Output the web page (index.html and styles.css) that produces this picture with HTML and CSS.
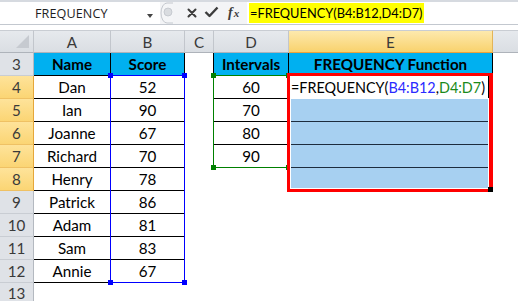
FILE: index.html
```html
<!DOCTYPE html>
<html>
<head>
<meta charset="utf-8">
<link rel="stylesheet" href="styles.css">
</head>
<body>
<div class="app">
  <div class="fbar">
    <div class="namebox"><span class="nb-text">FREQUENCY</span><span class="nb-arrow"></span></div>
    <div class="tools">
      <svg class="knob" width="14" height="22" viewBox="0 0 14 22">
        <path d="M13 1 H7 A6 10 0 0 0 7 21 H13" fill="#f4f5f7" stroke="#c4c8ce" stroke-width="1"/>
        <circle cx="8" cy="10" r="4" fill="#d9dce0" stroke="#c0c4ca" stroke-width="0.8"/>
      </svg>
      <svg class="ic-x" width="10" height="10" viewBox="0 0 10 10">
        <path d="M1.5 1.5 L8.5 8.5 M8.5 1.5 L1.5 8.5" stroke="#3c3c3c" stroke-width="2" stroke-linecap="round"/>
      </svg>
      <svg class="ic-check" width="15" height="12" viewBox="0 0 15 12">
        <path d="M1.5 6 L5.5 10 L13.5 1.5" fill="none" stroke="#3c3c3c" stroke-width="2.4" stroke-linejoin="round"/>
      </svg>
      <span class="fx"><i>f</i><i class="fx-x">x</i></span>
    </div>
    <div class="formula"><span class="hl">=FREQUENCY(B4:B12,D4:D7)</span></div>
  </div>

  <div class="sheet">
    <div class="ch corner"><span class="tri"></span></div>
    <div class="ch">A</div>
    <div class="ch">B</div>
    <div class="ch">C</div>
    <div class="ch">D</div>
    <div class="ch ch-sel">E</div>
    <div class="ch ch-rest"></div>

    <div class="rh">3</div>
    <div class="c t hdr">Name</div>
    <div class="c t hdr">Score</div>
    <div class="c br"></div>
    <div class="c t hdr">Intervals</div>
    <div class="c t hdr">FREQUENCY Function</div>
    <div class="c"></div>

    <div class="rh rh-sel">4</div>
    <div class="c t">Dan</div>
    <div class="c t">52</div>
    <div class="c br"></div>
    <div class="c t">60</div>
    <div class="c e4"><span class="e4-text">=FREQUENCY(<span class="ref-b">B4:B12</span>,<span class="ref-d">D4:D7</span>)</span></div>
    <div class="c"></div>

    <div class="rh rh-sel">5</div>
    <div class="c t">Ian</div>
    <div class="c t">90</div>
    <div class="c br"></div>
    <div class="c t">70</div>
    <div class="c efill"></div>
    <div class="c"></div>

    <div class="rh rh-sel">6</div>
    <div class="c t">Joanne</div>
    <div class="c t">67</div>
    <div class="c br"></div>
    <div class="c t">80</div>
    <div class="c efill"></div>
    <div class="c"></div>

    <div class="rh rh-sel">7</div>
    <div class="c t">Richard</div>
    <div class="c t">70</div>
    <div class="c br"></div>
    <div class="c t">90</div>
    <div class="c efill"></div>
    <div class="c"></div>

    <div class="rh rh-sel">8</div>
    <div class="c t">Henry</div>
    <div class="c t">78</div>
    <div class="c"></div>
    <div class="c"></div>
    <div class="c efill last"></div>
    <div class="c"></div>

    <div class="rh">9</div>
    <div class="c t">Patrick</div>
    <div class="c t">86</div>
    <div class="c"></div><div class="c"></div><div class="c"></div><div class="c"></div>

    <div class="rh">10</div>
    <div class="c t">Adam</div>
    <div class="c t">81</div>
    <div class="c"></div><div class="c"></div><div class="c"></div><div class="c"></div>

    <div class="rh">11</div>
    <div class="c t">Sam</div>
    <div class="c t">83</div>
    <div class="c"></div><div class="c"></div><div class="c"></div><div class="c"></div>

    <div class="rh">12</div>
    <div class="c t">Annie</div>
    <div class="c t">67</div>
    <div class="c"></div><div class="c"></div><div class="c"></div><div class="c"></div>

    <div class="rh rh-last">13</div>
    <div class="c"></div><div class="c"></div><div class="c"></div><div class="c"></div><div class="c"></div><div class="c"></div>

    <div class="range range-b"></div>
    <span class="sq sq-b" style="left:108px;top:43px"></span>
    <span class="sq sq-b" style="left:182px;top:43px"></span>
    <span class="sq sq-b" style="left:108px;top:250px"></span>
    <span class="sq sq-b" style="left:182px;top:250px"></span>

    <div class="range range-d"></div>
    <span class="sq sq-d" style="left:211px;top:43px"></span>
    <span class="sq sq-d" style="left:286px;top:43px"></span>
    <span class="sq sq-d" style="left:211px;top:135px"></span>
    <span class="sq sq-d" style="left:286px;top:135px"></span>

    <div class="red-box"></div>
    <div class="active-edge"></div>
    <div class="handle"></div>
  </div>
</div>
</body>
</html>
```

FILE: styles.css
```css
html, body {
  margin: 0;
  padding: 0;
  background: #ffffff;
  overflow: hidden;
}

.app {
  width: 518px;
  height: 301px;
  overflow: hidden;
  position: relative;
  font-family: "Lato", "Liberation Sans", sans-serif;
}

/* ---------- formula bar ---------- */
.fbar {
  height: 22px;
  display: flex;
  border-top: 2px solid #d6dae0;
  border-bottom: 1px solid #c3c8cf;
  margin-bottom: 5px;
  background: #ffffff;
}

.namebox {
  width: 160px;
  display: flex;
  align-items: center;
  position: relative;
}

.nb-text {
  font-family: "Open Sans", "Liberation Sans", sans-serif;
  font-size: 12.6px;
  color: #1e1e1e;
  margin-left: 35px;
  letter-spacing: 0.1px;
}

.nb-arrow {
  position: absolute;
  left: 147px;
  top: 12px;
  width: 0;
  height: 0;
  border-left: 3.5px solid transparent;
  border-right: 3.5px solid transparent;
  border-top: 4px solid #444;
}

.tools {
  width: 87px;
  display: flex;
  align-items: center;
  background: #f3f4f6;
}

.ic-x {
  margin-left: 13px;
}

.ic-check {
  margin-left: 7px;
  margin-top: -2px;
}

.fx {
  margin-left: 9px;
  font-family: "Liberation Serif", "DejaVu Serif", serif;
  font-weight: bold;
  font-size: 14px;
  color: #3c3c3c;
  line-height: 1;
}

.fx-x {
  font-size: 11px;
  margin-left: 1px;
}

.formula {
  flex: 1;
  display: flex;
  align-items: center;
  padding-left: 2px;
}

.hl {
  background: #ffff00;
  font-size: 12.8px;
  color: #000;
  line-height: 20px;
  padding: 0 2px 0 1px;
  white-space: nowrap;
}

/* ---------- sheet ---------- */
.sheet {
  position: relative;
  display: grid;
  grid-template-columns: 34px 77px 74px 29px 75px 204px 1fr;
  grid-template-rows: repeat(12, 23px);
  font-size: 15.2px;
  line-height: 16px;
}

.ch, .rh, .c {
  box-sizing: border-box;
  display: flex;
  align-items: center;
  justify-content: center;
  white-space: nowrap;
}

.ch {
  background: linear-gradient(#e6e9ed, #dadee3);
  border-top: 1px solid #c9cdd3;
  border-right: 1px solid #c2c6cc;
  border-bottom: 1px solid #aeb3ba;
  color: #3a3a3a;
  padding-top: 1px;
}

.corner {
  position: relative;
}

.tri {
  position: absolute;
  right: 4px;
  bottom: 4px;
  width: 0;
  height: 0;
  border-left: 13px solid transparent;
  border-bottom: 13px solid #c6cad0;
}

.ch-sel {
  background: linear-gradient(#fde9ad, #f9d26d);
  border-right: 1px solid #e3b458;
  border-bottom: 1px solid #eea23b;
  color: #3a3a3a;
}

.ch-rest {
  border-right: none;
}

.rh {
  background: #dfe2e7;
  border-right: 1px solid #b4b9c0;
  border-bottom: 1px solid #c9cdd3;
  color: #3a3a3a;
}

.rh-last {
  align-items: flex-start;
  padding-top: 2px;
}

.rh-sel {
  background: linear-gradient(#fee39a, #fbd574);
  border-right: 1px solid #e5a73a;
  border-bottom: 1px solid #efc164;
}

.c {
  background: #ffffff;
  color: #000;
}

.t {
  border-right: 1px solid #000;
  border-bottom: 1px solid #000;
}

.br {
  border-right: 1px solid #000;
}

.hdr {
  background: #00b0f0;
  font-weight: bold;
}

.e4 {
  justify-content: flex-start;
  padding-left: 2px;
  overflow: hidden;
}

.e4-text {
  font-size: 14.4px;
}

.ref-b {
  color: #2a2aff;
}

.ref-d {
  color: #1a8a1a;
}

.efill {
  background: #a7d0f1;
  border-bottom: 1px solid #1d2c3e;
}

.efill.last {
  border-bottom: none;
}

/* ---------- overlays ---------- */
.range {
  position: absolute;
  box-sizing: border-box;
}

.range-b {
  left: 110px;
  top: 45px;
  width: 75px;
  height: 208px;
  border: 1px solid #0000ff;
}

.range-d {
  left: 213px;
  top: 45px;
  width: 76px;
  height: 93px;
  border: 1px solid #008000;
}

.sq {
  position: absolute;
  width: 5px;
  height: 5px;
}

.sq-b {
  background: #0000ff;
}

.sq-d {
  background: #008000;
}

.red-box {
  position: absolute;
  box-sizing: border-box;
  left: 287px;
  top: 43px;
  width: 206px;
  height: 119px;
  border: 3px solid #ff0000;
  border-right-width: 4px;
  box-shadow: inset 0 0 0 1px #ffffff;
}

.active-edge {
  position: absolute;
  left: 488px;
  top: 46px;
  width: 1px;
  height: 22px;
  background: #000;
}

.handle {
  position: absolute;
  left: 488px;
  top: 157px;
  width: 5px;
  height: 5px;
  background: #000;
}
```
